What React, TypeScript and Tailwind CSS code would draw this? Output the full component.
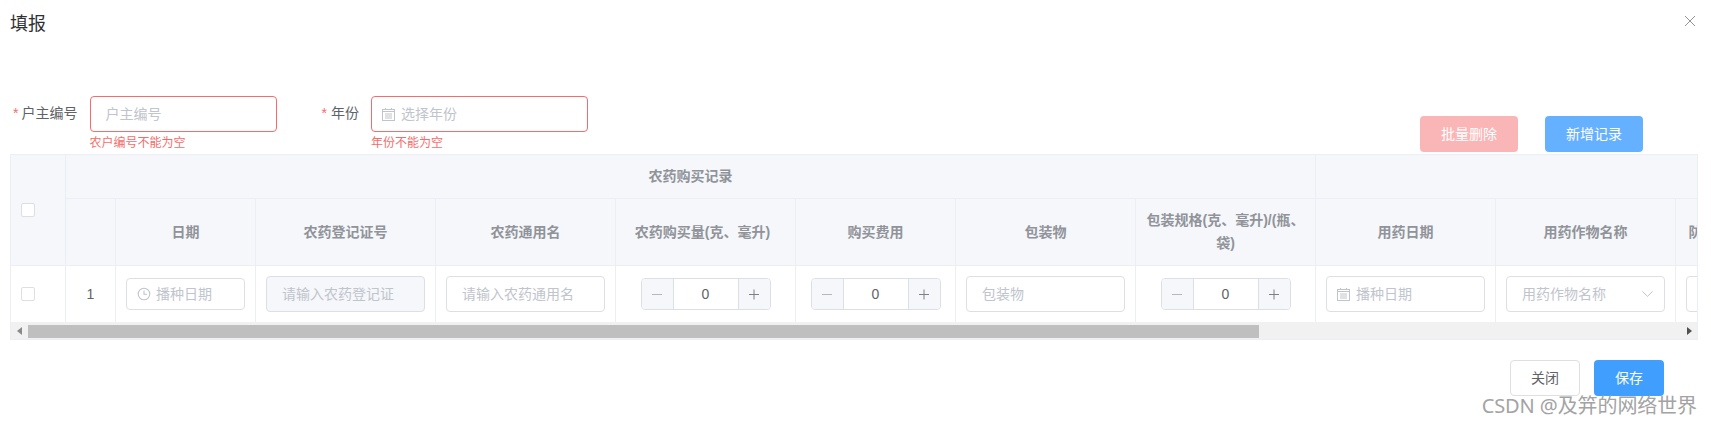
const inputBase =
  'w-full rounded-[4px] border border-[#dcdfe6] text-[14px] text-[#606266] outline-none placeholder:text-[#c0c4cc]';

function CalendarIcon({ className }: { className?: string }) {
  return (
    <svg viewBox="0 0 13 13" fill="none" stroke="#c0c4cc" strokeWidth="1" className={className}>
      <rect x="0.5" y="1.5" width="12" height="11" />
      <path d="M0.5 3.5h12M3 6h7M3 8h7M3 10h7M3.5 0v2M9.5 0v2" />
    </svg>
  );
}

function ClockIcon({ className }: { className?: string }) {
  return (
    <svg viewBox="0 0 14 14" fill="none" stroke="#c0c4cc" strokeWidth="1.1" className={className}>
      <circle cx="7" cy="7" r="5.8" />
      <path d="M7 3.4V7.2h3" />
    </svg>
  );
}

function Checkbox() {
  return <span className="block h-[14px] w-[14px] rounded-[2px] border border-[#dcdfe6] bg-white"></span>;
}

function NumberInput() {
  return (
    <div className="mx-auto flex h-[32px] w-[130px] overflow-hidden rounded-[4px] border border-[#dcdfe6] bg-white">
      <span className="flex w-[32px] items-center justify-center border-r border-[#dcdfe6] bg-[#f5f7fa]">
        <svg viewBox="0 0 12 12" stroke="#b4b8c0" strokeWidth="1" className="h-[12px] w-[12px]">
          <path d="M1 6.5h10" />
        </svg>
      </span>
      <span className="flex flex-1 items-center justify-center text-[14px] text-[#606266]">0</span>
      <span className="flex w-[32px] items-center justify-center border-l border-[#dcdfe6] bg-[#f5f7fa]">
        <svg viewBox="0 0 12 12" stroke="#7d8087" strokeWidth="1" className="h-[12px] w-[12px]">
          <path d="M1 6.5h10M6 1.5v10" />
        </svg>
      </span>
    </div>
  );
}

const th = 'border-r border-b border-[#ebeef5] bg-[#f5f7fa] px-[10px] text-center align-middle text-[14px] leading-[23px] font-bold text-[#909399]';
const td = 'border-r border-[#ebeef5] px-[10px] text-center align-middle text-[14px] text-[#606266]';

export default function App() {
  return (
    <div
      className="relative h-[425px] overflow-hidden bg-white pr-[13px] pl-[10px]"
      style={{ fontFamily: '"Liberation Sans", "Noto Sans CJK SC", sans-serif' }}
    >
      {/* Dialog header */}
      <div className="flex h-[96px] items-start justify-between pt-[12px]">
        <span className="text-[18px] leading-[24px] text-[#303133]">填报</span>
        <svg viewBox="0 0 10 10" stroke="#909399" strokeWidth="1" className="mt-[4px] mr-[3px] h-[10px] w-[10px]">
          <path d="M0 0l10 10M10 0L0 10" />
        </svg>
      </div>

      {/* Form and toolbar */}
      <div className="flex h-[58px] items-start justify-between">
        <div className="flex items-start">
          <div className="flex items-start pl-[3px]">
            <label className="mr-[13px] flex h-[35px] items-center text-[14px] text-[#606266]">
              <span className="mr-[3px] text-[#f56c6c]">*</span>户主编号
            </label>
            <div className="w-[187px]">
              <input placeholder="户主编号" className={`${inputBase} h-[36px] border-[#f56c6c] bg-white pr-[15px] pl-[14px]`} />
              <div className="mt-[3px] -ml-px text-[12px] leading-[16px] text-[#f56c6c]">农户编号不能为空</div>
            </div>
          </div>
          <div className="ml-[44px] flex items-start">
            <label className="mr-[12px] flex h-[35px] items-center text-[14px] text-[#606266]">
              <span className="mr-[4px] text-[#f56c6c]">*</span>年份
            </label>
            <div className="w-[217px]">
              <div className="relative">
                <CalendarIcon className="absolute top-[12px] left-[11px] h-[13px] w-[13px]" />
                <input placeholder="选择年份" className={`${inputBase} h-[36px] border-[#f56c6c] bg-white pr-[15px] pl-[29px]`} />
              </div>
              <div className="mt-[3px] text-[12px] leading-[16px] text-[#f56c6c]">年份不能为空</div>
            </div>
          </div>
        </div>
        <div className="mt-[20px] mr-[55px] flex gap-[27px]">
          <button className="h-[36px] w-[98px] rounded-[4px] bg-[#fab6b6] text-[14px] text-white">批量删除</button>
          <button className="h-[36px] w-[98px] rounded-[4px] bg-[#66b1ff] text-[14px] text-white">新增记录</button>
        </div>
      </div>

      {/* Table */}
      <div className="overflow-hidden border-t border-r border-b border-l border-[#ebeef5]">
        <table className="w-[1845px] table-fixed border-separate border-spacing-0">
          <colgroup>
            <col className="w-[55px]" />
            <col className="w-[50px]" />
            <col className="w-[140px]" />
            <col className="w-[180px]" />
            <col className="w-[180px]" />
            <col className="w-[180px]" />
            <col className="w-[160px]" />
            <col className="w-[180px]" />
            <col className="w-[180px]" />
            <col className="w-[180px]" />
            <col className="w-[180px]" />
            <col className="w-[180px]" />
          </colgroup>
          <thead>
            <tr className="h-[44px]">
              <th rowSpan={2} className={th}>
                <Checkbox />
              </th>
              <th colSpan={8} className={th}>农药购买记录</th>
              <th colSpan={3} className={th}></th>
            </tr>
            <tr className="h-[67px]">
              <th className={th}></th>
              <th className={th}>日期</th>
              <th className={th}>农药登记证号</th>
              <th className={th}>农药通用名</th>
              <th className={th}><span className="mr-[6px] inline-block">农药购买量(克、毫升)</span></th>
              <th className={th}>购买费用</th>
              <th className={th}>包装物</th>
              <th className={th}>包装规格(克、毫升)/(瓶、袋)</th>
              <th className={th}>用药日期</th>
              <th className={th}>用药作物名称</th>
              <th className={th}>防治对象及防治方法名称</th>
            </tr>
          </thead>
          <tbody>
            <tr className="h-[56px]">
              <td className={td}><Checkbox /></td>
              <td className={td}>1</td>
              <td className={td}>
                <div className="relative">
                  <ClockIcon className="absolute top-[9px] left-[11px] h-[14px] w-[14px]" />
                  <input placeholder="播种日期" className={`${inputBase} h-[32px] bg-white pl-[29px]`} />
                </div>
              </td>
              <td className={td}>
                <input disabled placeholder="请输入农药登记证" className={`${inputBase} h-[36px] bg-[#f5f7fa] px-[15px]`} />
              </td>
              <td className={td}>
                <input placeholder="请输入农药通用名" className={`${inputBase} h-[36px] bg-white px-[15px]`} />
              </td>
              <td className={td}><NumberInput /></td>
              <td className={td}><NumberInput /></td>
              <td className={td}>
                <input placeholder="包装物" className={`${inputBase} h-[36px] bg-white px-[15px]`} />
              </td>
              <td className={td}><NumberInput /></td>
              <td className={td}>
                <div className="relative">
                  <CalendarIcon className="absolute top-[12px] left-[11px] h-[13px] w-[13px]" />
                  <input placeholder="播种日期" className={`${inputBase} h-[36px] bg-white pl-[29px]`} />
                </div>
              </td>
              <td className={td}>
                <div className="relative">
                  <input readOnly placeholder="用药作物名称" className={`${inputBase} h-[36px] bg-white pr-[30px] pl-[15px]`} />
                  <svg viewBox="0 0 11 6" fill="none" stroke="#c0c4cc" strokeWidth="1" className="absolute top-[15px] right-[12px] h-[6px] w-[11px]">
                    <path d="M0.4 0.4L5.5 5.4L10.6 0.4" />
                  </svg>
                </div>
              </td>
              <td className={td}>
                <input className={`${inputBase} h-[36px] bg-white px-[15px]`} />
              </td>
            </tr>
          </tbody>
        </table>

        {/* Scrollbar */}
        <div className="flex h-[17px] items-center bg-[#f1f1f1]">
          <span className="flex w-[17px] justify-center">
            <svg viewBox="0 0 6 8" fill="#8a8a8a" className="h-[8px] w-[6px]">
              <path d="M5 0v8L0 4z" />
            </svg>
          </span>
          <span className="mt-[2px] h-[13px] w-[1231px] bg-[#bfbfbf]"></span>
          <span className="flex-1"></span>
          <span className="flex w-[17px] justify-center">
            <svg viewBox="0 0 6 8" fill="#505050" className="h-[8px] w-[6px]">
              <path d="M1 0v8l5-4z" />
            </svg>
          </span>
        </div>
      </div>

      {/* Footer */}
      <div className="mt-[20px] flex justify-end gap-[14px] pr-[34px]">
        <button className="h-[36px] w-[70px] rounded-[4px] border border-[#dcdfe6] bg-white text-[14px] text-[#606266]">关闭</button>
        <button className="h-[36px] w-[70px] rounded-[4px] bg-[#409eff] text-[14px] text-white">保存</button>
      </div>

      <div
        className="absolute right-[14px] bottom-[7px] text-[20px] leading-[24px] tracking-[-0.1px] text-[#a3a3a3]"
        style={{ fontFamily: '"Noto Sans", "Noto Sans CJK SC", sans-serif' }}
      >
        CSDN @及笄的网络世界
      </div>
    </div>
  );
}
